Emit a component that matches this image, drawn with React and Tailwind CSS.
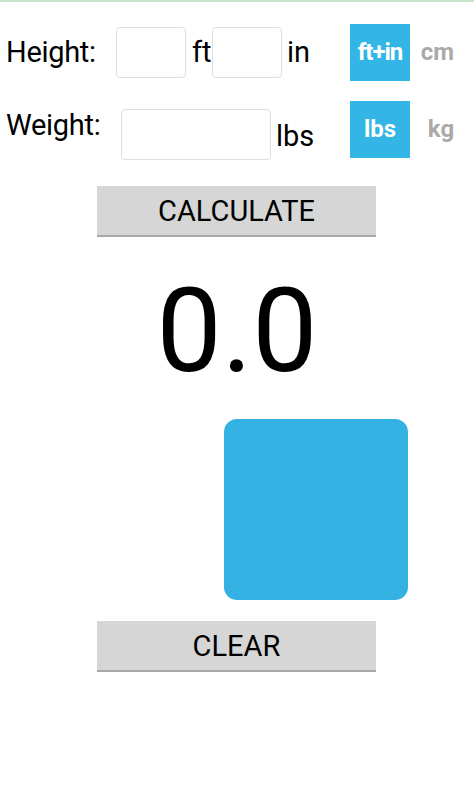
import React, { useState } from "react";

const App = () => {
  const [heightUnit, setHeightUnit] = useState("ftin");
  const [weightUnit, setWeightUnit] = useState("lbs");

  return (
    <div className="w-[474px] h-[790px] bg-white text-black overflow-hidden" style={{ fontFamily: "Roboto, 'Noto Sans', sans-serif" }}>
      {/* top strip */}
      <div className="h-[2px] bg-[#c8e6c9]" />

      {/* Height row */}
      <div className="flex items-center h-[56px] mt-[22px]">
        <span className="ml-[6px] text-[29px] leading-none w-[110px] tracking-[-0.3px]">Height:</span>
        <input className="w-[70px] h-[51px] border border-[#dedede] rounded-[4px] outline-none" />
        <span className="ml-[6px] text-[29px] leading-none w-[20px]">ft</span>
        <input className="w-[70px] h-[51px] border border-[#dedede] rounded-[4px] outline-none" />
        <span className="ml-[5px] text-[29px] leading-none w-[63px]">in</span>
        <button
          onClick={() => setHeightUnit("ftin")}
          className={`w-[60px] h-[57px] text-[24px] font-bold tracking-[-1px] ${heightUnit === "ftin" ? "bg-[#33b5e5] text-white" : "text-[#aaaaaa]"}`}
        >
          ft+in
        </button>
        <button
          onClick={() => setHeightUnit("cm")}
          className={`w-[55px] h-[57px] text-[24px] font-bold ${heightUnit === "cm" ? "bg-[#33b5e5] text-white" : "text-[#aaaaaa]"}`}
        >
          cm
        </button>
      </div>

      {/* Weight row */}
      <div className="flex items-center h-[62px] mt-[18px]">
        <span className="ml-[6px] text-[29px] leading-none w-[115px] mb-[8px] tracking-[-0.3px]">Weight:</span>
        <input className="w-[150px] h-[51px] border border-[#dedede] rounded-[4px] outline-none mt-[11px]" />
        <span className="ml-[5px] text-[29px] leading-none w-[74px] mt-[14px]">lbs</span>
        <button
          onClick={() => setWeightUnit("lbs")}
          className={`w-[60px] h-[57px] text-[24px] font-bold ${weightUnit === "lbs" ? "bg-[#33b5e5] text-white" : "text-[#aaaaaa]"}`}
        >
          lbs
        </button>
        <button
          onClick={() => setWeightUnit("kg")}
          className={`w-[62px] h-[57px] text-[24px] font-bold ${weightUnit === "kg" ? "bg-[#33b5e5] text-white" : "text-[#aaaaaa]"}`}
        >
          kg
        </button>
      </div>

      {/* Calculate */}
      <div className="flex justify-center mt-[26px] pr-[1px]">
        <button className="w-[279px] h-[51px] bg-[#d6d6d6] border-b-2 border-[#a8a8a8] text-[29px] leading-none pt-[2px]">
          CALCULATE
        </button>
      </div>

      {/* Result */}
      <div className="flex justify-center mt-[36px]">
        <span className="text-[116px] leading-none">0.0</span>
      </div>

      {/* Color swatch */}
      <div className="flex justify-end pr-[66px] mt-[30px]">
        <div className="w-[184px] h-[181px] bg-[#33b1e3] rounded-[13px]" />
      </div>

      {/* Clear */}
      <div className="flex justify-center mt-[21px] pr-[1px]">
        <button className="w-[279px] h-[51px] bg-[#d6d6d6] border-b-2 border-[#a8a8a8] text-[29px] leading-none pt-[2px]">
          CLEAR
        </button>
      </div>
    </div>
  );
};

export default App;
